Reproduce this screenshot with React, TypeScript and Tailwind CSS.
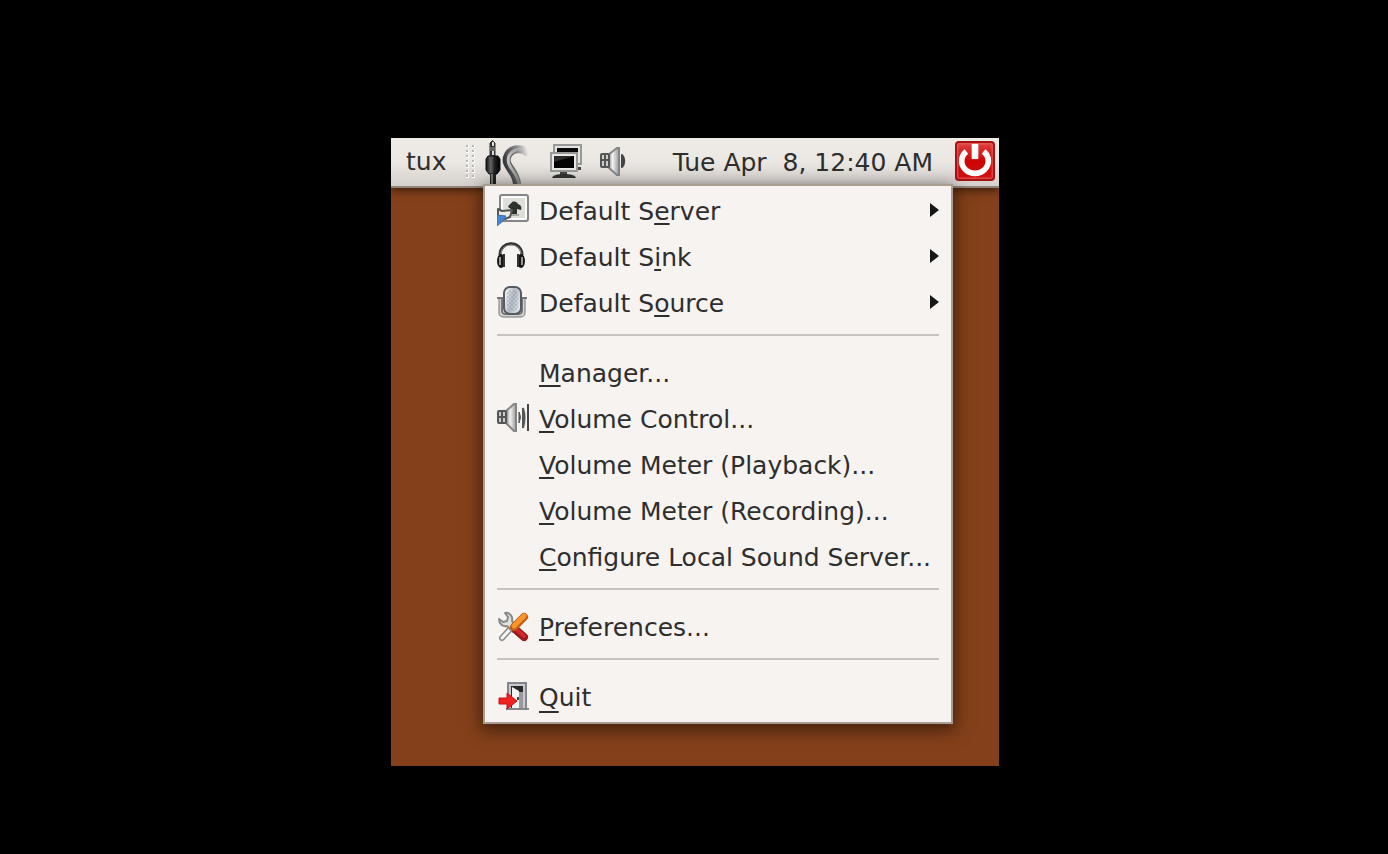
import { Fragment, type ReactNode } from 'react';

type MenuEntry = {
  before: string;
  key: string;
  after: string;
  icon?: ReactNode;
  submenu?: boolean;
  low?: boolean;
};

function GripIcon() {
  return (
    <svg viewBox="0 0 12 36" className="h-9 w-3" aria-hidden="true">
      <defs>
        <pattern id="grip" x="0" y="0" width="6" height="5" patternUnits="userSpaceOnUse">
          <path d="M1 1h3v3H1z" fill="#fff" />
          <path d="M1 1h2v2H1z" fill="#b9b5b1" />
        </pattern>
      </defs>
      <path d="M0 0h12v35H0z" fill="url(#grip)" />
    </svg>
  );
}

function PlugIcon() {
  return (
    <svg viewBox="0 0 48 46" className="h-[46px] w-12" aria-hidden="true">
      <defs>
        <linearGradient id="plug" x1="0" x2="1">
          <stop offset="0" stopColor="#111" />
          <stop offset="0.35" stopColor="#666" />
          <stop offset="0.6" stopColor="#222" />
          <stop offset="1" stopColor="#000" />
        </linearGradient>
        <linearGradient id="cable" x1="0" x2="1" y1="0.6" y2="0.2">
          <stop offset="0" stopColor="#3a3a3a" />
          <stop offset="0.6" stopColor="#888" />
          <stop offset="1" stopColor="#888" stopOpacity="0" />
        </linearGradient>
        <linearGradient id="cable-shine" x1="0" x2="1">
          <stop offset="0" stopColor="#c4c4c4" />
          <stop offset="1" stopColor="#c4c4c4" stopOpacity="0" />
        </linearGradient>
      </defs>
      <path d="M7 4 9.500 1.500 12 4v14H7z" fill="#333" stroke="#333" />
      <path d="M10 3v4M10 12v4" stroke="#ddd" strokeWidth="2" />
      <path d="M7 9h6M7 11h6" stroke="#999" />
      <path d="M5 17h10l2 3v11l-3 4H6l-3-4V20z" fill="url(#plug)" stroke="#111" />
      <path d="M7 35h6v11H7z" fill="#222" />
      <path d="M9 35v11" stroke="#777" strokeWidth="2" />
      <path d="M46 15C40 8 29 9 25 16c-6 11 9 15 9 30" fill="none" stroke="url(#cable)" strokeWidth="8" />
      <path d="M43 11C34 9 28 12 26 17c-4 11 9 15 10 29" fill="none" stroke="url(#cable-shine)" strokeWidth="3" />
    </svg>
  );
}

function MonitorsIcon() {
  return (
    <svg viewBox="0 0 34 36" className="h-9 w-[34px]" aria-hidden="true">
      <path d="M5 1h27v19H5z" fill="#e4e4e2" stroke="#989896" strokeWidth="2" />
      <path d="M8 4h21v14H8z" fill="#080808" />
      <path d="M26 23h6v3h-6z" fill="#444" />
      <path d="M2 9h26v18H2z" fill="#e8e8e6" stroke="#989896" strokeWidth="2" />
      <path d="M5 12h20v12H5z" fill="#050505" />
      <path d="M5 18v-6h20z" fill="#2c2c2c" />
      <path d="M11 28h7v3h-7z" fill="#444" />
      <path d="M3 34c1-3 5-4 12-4s11 1 12 4z" fill="#333" />
    </svg>
  );
}

function TraySpeakerIcon() {
  return (
    <svg viewBox="0 0 28 32" className="h-8 w-7" aria-hidden="true">
      <defs>
        <linearGradient id="cone" x1="0" x2="1">
          <stop offset="0" stopColor="#777" />
          <stop offset="0.4" stopColor="#f4f4f4" />
          <stop offset="1" stopColor="#999" />
        </linearGradient>
      </defs>
      <path d="M9 9 18 2h2v27h-2l-9-8z" fill="url(#cone)" stroke="#858585" strokeWidth="2" />
      <rect x="2" y="8" width="8" height="13" rx="1" fill="#ccc" stroke="#555" strokeWidth="2" />
      <path d="M6 9v11M3 14h6" stroke="#555" strokeWidth="2" />
      <path d="M23 9c3 3 3 9 0 12z" fill="#444" stroke="#444" strokeWidth="2" strokeLinejoin="round" />
    </svg>
  );
}

function PowerIcon() {
  return (
    <svg viewBox="0 0 42 42" className="size-10" aria-hidden="true">
      <defs>
        <linearGradient id="power" x2="0" y2="1">
          <stop offset="0" stopColor="#e04545" />
          <stop offset="0.5" stopColor="#cc0404" />
          <stop offset="1" stopColor="#d01212" />
        </linearGradient>
      </defs>
      <rect x="1" y="1" width="40" height="40" rx="3" fill="url(#power)" stroke="#a81212" strokeWidth="2" />
      <rect x="3" y="3" width="36" height="36" rx="1" fill="none" stroke="#e86464" />
      <path d="M12 11a14 13 0 1 0 18 0" fill="none" stroke="#fff" strokeWidth="6" />
      <path d="M21 3v16" stroke="#fff" strokeWidth="7" />
    </svg>
  );
}

function ServerIcon() {
  return (
    <svg viewBox="0 0 32 34" className="h-[34px] w-8" aria-hidden="true">
      <rect x="3" y="1" width="28" height="26" rx="2" fill="#fcfcfc" stroke="#858585" strokeWidth="2" />
      <path d="M6 4h22v20H6z" fill="#dededb" />
      <path d="M11 13c1-3 3-3 4-5 3-1 5 0 6 2 3 1 4 3 3 6l-4-1v5h-6v-5z" fill="#2c332c" />
      <path d="M13 20h9v2h-9z" fill="#a8a8a2" />
      <path d="M1 22v-7l4 2 10-1-2 7-5 2z" fill="#ecece8" stroke="#555" strokeWidth="2" strokeLinejoin="round" />
      <path d="M0 32V21l9 1-3 5z" fill="#4a86cf" stroke="#3a70b5" />
    </svg>
  );
}

function HeadphonesIcon() {
  return (
    <svg viewBox="0 0 32 34" className="h-[34px] w-8" aria-hidden="true">
      <path d="M3 15C3 0 25 0 25 15" fill="none" stroke="#333" strokeWidth="3" />
      <path d="M4 14C4 2 24 2 24 14" fill="none" stroke="#999" />
      <ellipse cx="4" cy="21" rx="4" ry="7" fill="#161616" />
      <ellipse cx="24" cy="21" rx="4" ry="7" fill="#161616" />
      <path d="M3 17v8M25 17v8" stroke="#999" strokeWidth="2" />
      <path d="M7 14v13M21 14v13" stroke="#333" strokeWidth="2" />
    </svg>
  );
}

function MicrophoneIcon() {
  return (
    <svg viewBox="0 0 32 34" className="h-[34px] w-8" aria-hidden="true">
      <defs>
        <linearGradient id="mic" x1="0" x2="1" y1="0.3" y2="0.7">
          <stop offset="0" stopColor="#f0f1f3" />
          <stop offset="0.5" stopColor="#b4bac4" />
          <stop offset="1" stopColor="#e8eaee" />
        </linearGradient>
        <pattern id="mesh" width="4" height="4" patternUnits="userSpaceOnUse">
          <path d="M0 0h2v2H0zM2 2h2v2H2z" fill="#7f8791" opacity="0.3" />
        </pattern>
      </defs>
      <path d="M0 12h5v13q0 3 3 3h14q3 0 3-3V12h5" fill="none" stroke="#777" strokeWidth="2" />
      <path d="M3 13v13q0 4 4 4h16q4 0 4-4V13" fill="none" stroke="#d2d2d0" strokeWidth="2" />
      <path d="M2 12v15q0 4 5 4h16q5 0 5-4V12" fill="none" stroke="#777" />
      <rect x="7" y="1" width="17" height="27" rx="6" fill="url(#mic)" stroke="#555b63" strokeWidth="2" />
      <rect x="10" y="4" width="11" height="21" rx="3" fill="url(#mesh)" />
    </svg>
  );
}

function VolumeIcon() {
  return (
    <svg viewBox="0 0 32 34" className="h-[34px] w-8" aria-hidden="true">
      <path d="M9 9 17 2h2v27h-2l-8-8z" fill="url(#cone)" stroke="#858585" strokeWidth="2" />
      <rect x="1" y="9" width="8" height="12" rx="1" fill="#ccc" stroke="#555" strokeWidth="2" />
      <path d="M5 10v10M2 15h6" stroke="#555" strokeWidth="2" />
      <path d="M22 10q3 5 0 11z" fill="#555" stroke="#555" />
      <path d="M26 6q3 9 0 20z" fill="#555" stroke="#555" strokeWidth="2" />
      <path d="M31 2v27" stroke="#444" strokeWidth="2" />
    </svg>
  );
}

function ToolsIcon() {
  return (
    <svg viewBox="0 0 32 34" className="h-[34px] w-8" aria-hidden="true">
      <path d="M5 28 15 17" stroke="#8a8a8a" strokeWidth="6" strokeLinecap="round" />
      <path d="M5 28 15 17" stroke="#f4f4f4" strokeWidth="3" strokeLinecap="round" />
      <path
        d="M8 3c5-1 8 4 7 8l5 6-4 5-6-6c-4 1-8-2-8-7l4 3 4-1 1-4z"
        fill="#dfe1e1"
        stroke="#8a8a8a"
        strokeWidth="2"
        strokeLinejoin="round"
      />
      <path d="m19 20 8 7" stroke="#9a1818" strokeWidth="8" strokeLinecap="round" />
      <path d="m19 19 8 7" stroke="#cf2a2a" strokeWidth="4" strokeLinecap="round" />
      <path d="M17 17 27 7" stroke="#c05d12" strokeWidth="8" strokeLinecap="round" />
      <path d="M17 16 27 6" stroke="#f8942a" strokeWidth="5" strokeLinecap="round" />
    </svg>
  );
}

function QuitIcon() {
  return (
    <svg viewBox="0 0 32 34" className="h-[34px] w-8" aria-hidden="true">
      <path d="M11 3h18v26H11z" fill="#c9c9d2" stroke="#85858a" strokeWidth="2" />
      <path d="M14 6h12v22H14z" fill="#2a2a2a" />
      <path d="m15 7 7 4v17h-7z" fill="#f4f4f4" />
      <path d="M22 12h4v16h-4z" fill="#9a9a9e" />
      <path d="M20 17h2v3h-2z" fill="#444" />
      <path d="M9 29h23" stroke="#858585" strokeWidth="2" />
      <path d="M2 18h8v-5l10 8-10 8v-5H2z" fill="#f02222" stroke="#c41212" />
    </svg>
  );
}

const groups: MenuEntry[][] = [
  [
    { before: 'Default S', key: 'e', after: 'rver', icon: <ServerIcon />, submenu: true },
    { before: 'Default S', key: 'i', after: 'nk', icon: <HeadphonesIcon />, submenu: true },
    { before: 'Default S', key: 'o', after: 'urce', icon: <MicrophoneIcon />, submenu: true },
  ],
  [
    { before: '', key: 'M', after: 'anager...' },
    { before: '', key: 'V', after: 'olume Control...', icon: <VolumeIcon /> },
    { before: '', key: 'V', after: 'olume Meter (Playback)...' },
    { before: '', key: 'V', after: 'olume Meter (Recording)...' },
    { before: '', key: 'C', after: 'onfigure Local Sound Server...' },
  ],
  [{ before: '', key: 'P', after: 'references...', icon: <ToolsIcon /> }],
  [{ before: '', key: 'Q', after: 'uit', icon: <QuitIcon />, low: true }],
];

function MenuItem({ item }: { item: MenuEntry }) {
  return (
    <button type="button" role="menuitem" className="flex h-[46px] w-full items-center gap-[10px] text-left">
      <span className="w-8 shrink-0">{item.icon}</span>
      <span className="pt-[2px] whitespace-nowrap">
        {item.before}
        <span
          className={
            item.low
              ? 'underline decoration-2 underline-offset-[5px] [text-decoration-skip-ink:none]'
              : 'underline decoration-2 underline-offset-[3px] [text-decoration-skip-ink:none]'
          }
        >
          {item.key}
        </span>
        {item.after}
      </span>
      {item.submenu && (
        <svg viewBox="0 0 10 16" className="ml-auto h-4 w-[10px] shrink-0" aria-hidden="true">
          <path d="M1 0v14l9-7z" fill="#161616" />
        </svg>
      )}
    </button>
  );
}

export default function App() {
  return (
    <div className="flex min-h-screen items-start justify-center bg-black pt-[138px] pb-[88px] pl-[2px] font-['DejaVu_Sans',sans-serif] text-[25px] leading-8 text-[#2e2e2e]">
      <div className="relative w-full max-w-[608px] bg-[#84401a] pb-[42px]">
        <header className="flex h-[50px] items-center border-b-2 border-[#8f8578] bg-linear-to-b from-[#efebe7] via-[#ebe7e3] to-[#d5d0cb] pr-1 pl-[15px] shadow-[0_3px_8px_rgba(0,0,0,0.5)]">
          <button type="button">tux</button>
          <span className="ml-[19px]">
            <GripIcon />
          </span>
          <button type="button" aria-label="PulseAudio" className="ml-[6px]">
            <PlugIcon />
          </button>
          <button type="button" aria-label="Network" className="ml-[18px]">
            <MonitorsIcon />
          </button>
          <button type="button" aria-label="Volume" className="ml-4">
            <TraySpeakerIcon />
          </button>
          <button type="button" className="mr-[22px] ml-auto pt-[2px] whitespace-pre">
            {'Tue Apr  8, 12:40 AM'}
          </button>
          <button type="button" aria-label="Shut down" className="pb-[2px]">
            <PowerIcon />
          </button>
        </header>

        <div
          role="menu"
          className="relative -mt-1 mr-[46px] ml-[92px] border-2 border-[#a89d90] bg-[#f6f3f1] px-3 py-[2px] shadow-[0_4px_16px_2px_rgba(0,0,0,0.5)]"
        >
          {groups.map((group, i) => (
            <Fragment key={i}>
              {i > 0 && <hr className="mt-2 mb-[14px] border-t-2 border-[#c6c3c0]" />}
              {group.map(item => (
                <MenuItem key={item.key + item.after} item={item} />
              ))}
            </Fragment>
          ))}
        </div>
      </div>
    </div>
  );
}
